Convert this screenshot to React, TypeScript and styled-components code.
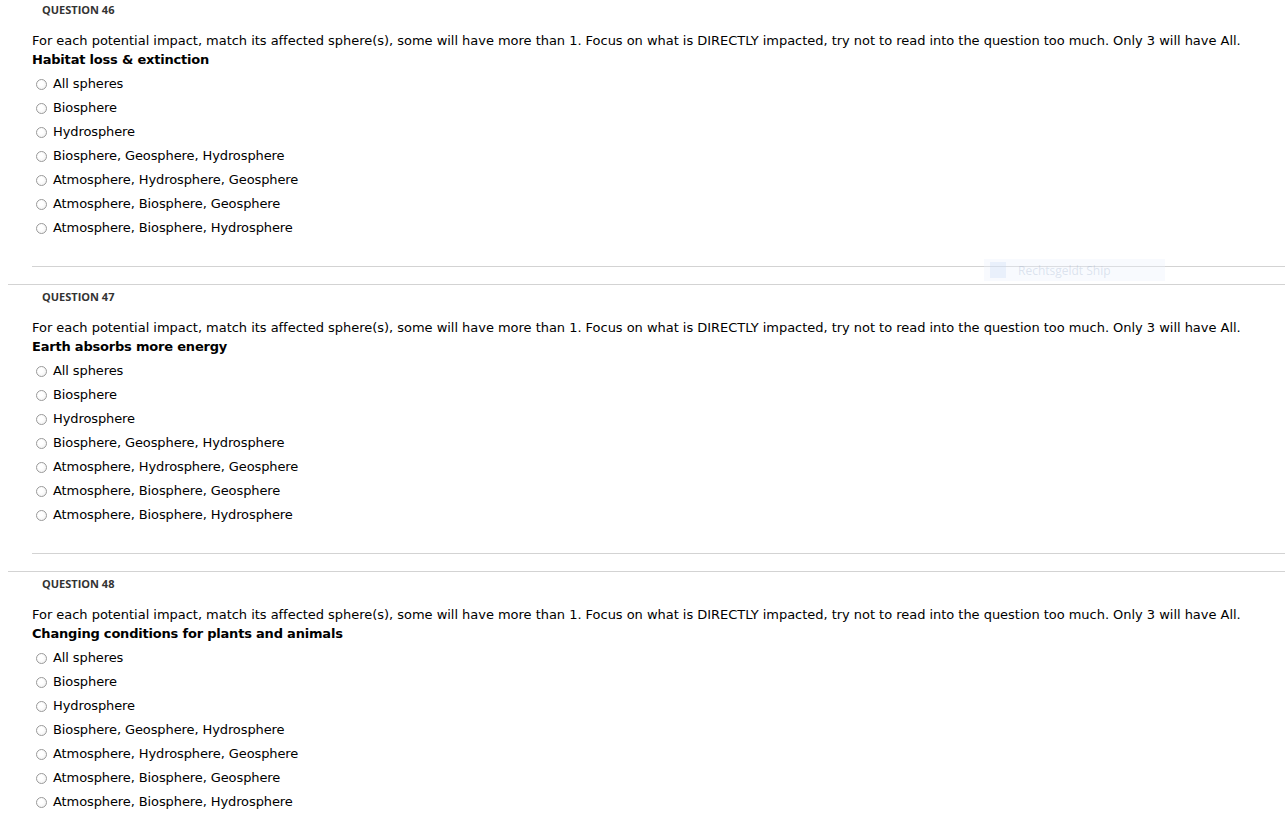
import styled, { createGlobalStyle } from 'styled-components';

const GlobalStyle = createGlobalStyle`
  html, body {
    margin: 0;
    padding: 0;
    background: #ffffff;
    overflow: hidden;
  }
`;

const Page = styled.div`
  margin-top: -3px;
  padding-left: 8px;
  width: 1277px;
`;

const QuestionBlock = styled.div`
  border-top: 1px solid #d3d3d3;
  height: 286px;
  position: relative;
`;

const QuestionLabel = styled.div`
  font-family: 'Open Sans', sans-serif;
  font-size: 11px;
  font-weight: 700;
  color: #333333;
  padding-left: 34px;
  padding-top: 4px;
  height: 16px;
  line-height: 16px;
`;

const QuestionBody = styled.div`
  margin-left: 24px;
  padding-top: 13px;
  border-bottom: 1px solid #d3d3d3;
  height: 249px;
  box-sizing: border-box;
  font-family: 'DejaVu Sans', Verdana, sans-serif;
  font-size: 13px;
  color: #000000;
`;

const Prompt = styled.div`
  line-height: 19px;
  letter-spacing: -0.03px;
`;

const ImpactTitle = styled.div`
  font-weight: 700;
  line-height: 19px;
  letter-spacing: -0.2px;
  margin-bottom: 2px;
`;

const OptionList = styled.div`
  display: flex;
  flex-direction: column;
`;

const OptionRow = styled.label`
  display: flex;
  align-items: center;
  height: 24px;
  padding-left: 4px;
  gap: 6px;
  letter-spacing: -0.1px;
`;

const RadioDot = styled.span`
  width: 9px;
  height: 9px;
  border-radius: 50%;
  border: 1px solid #9a9a9a;
  background: radial-gradient(circle at 40% 40%, #ffffff 30%, #ececec 100%);
  flex-shrink: 0;
  margin-top: 2px;
`;

const Toast = styled.div`
  position: absolute;
  right: 120px;
  top: -26px;
  width: 175px;
  height: 22px;
  display: flex;
  align-items: center;
  gap: 12px;
  padding-left: 6px;
  background: rgba(235, 242, 252, 0.35);
  font-family: 'Open Sans', sans-serif;
  font-size: 12px;
  color: rgba(150, 170, 200, 0.3);
`;

const ToastIcon = styled.span`
  width: 16px;
  height: 16px;
  background: rgba(200, 220, 245, 0.3);
`;

const options = [
  'All spheres',
  'Biosphere',
  'Hydrosphere',
  'Biosphere, Geosphere, Hydrosphere',
  'Atmosphere, Hydrosphere, Geosphere',
  'Atmosphere, Biosphere, Geosphere',
  'Atmosphere, Biosphere, Hydrosphere',
];

const questions = [
  { num: 46, title: 'Habitat loss & extinction' },
  { num: 47, title: 'Earth absorbs more energy' },
  { num: 48, title: 'Changing conditions for plants and animals' },
];

const promptText =
  'For each potential impact, match its affected sphere(s), some will have more than 1. Focus on what is DIRECTLY impacted, try not to read into the question too much. Only 3 will have All.';

export default function App() {
  return (
    <>
      <GlobalStyle />
      <Page>
        {questions.map((q) => (
          <QuestionBlock key={q.num}>
            {q.num === 47 && (
              <Toast>
                <ToastIcon />
                Rechtsgeldt Ship
              </Toast>
            )}
            <QuestionLabel>QUESTION {q.num}</QuestionLabel>
            <QuestionBody>
              <Prompt>{promptText}</Prompt>
              <ImpactTitle>{q.title}</ImpactTitle>
              <OptionList>
                {options.map((opt) => (
                  <OptionRow key={opt}>
                    <RadioDot />
                    {opt}
                  </OptionRow>
                ))}
              </OptionList>
            </QuestionBody>
          </QuestionBlock>
        ))}
      </Page>
    </>
  );
}
